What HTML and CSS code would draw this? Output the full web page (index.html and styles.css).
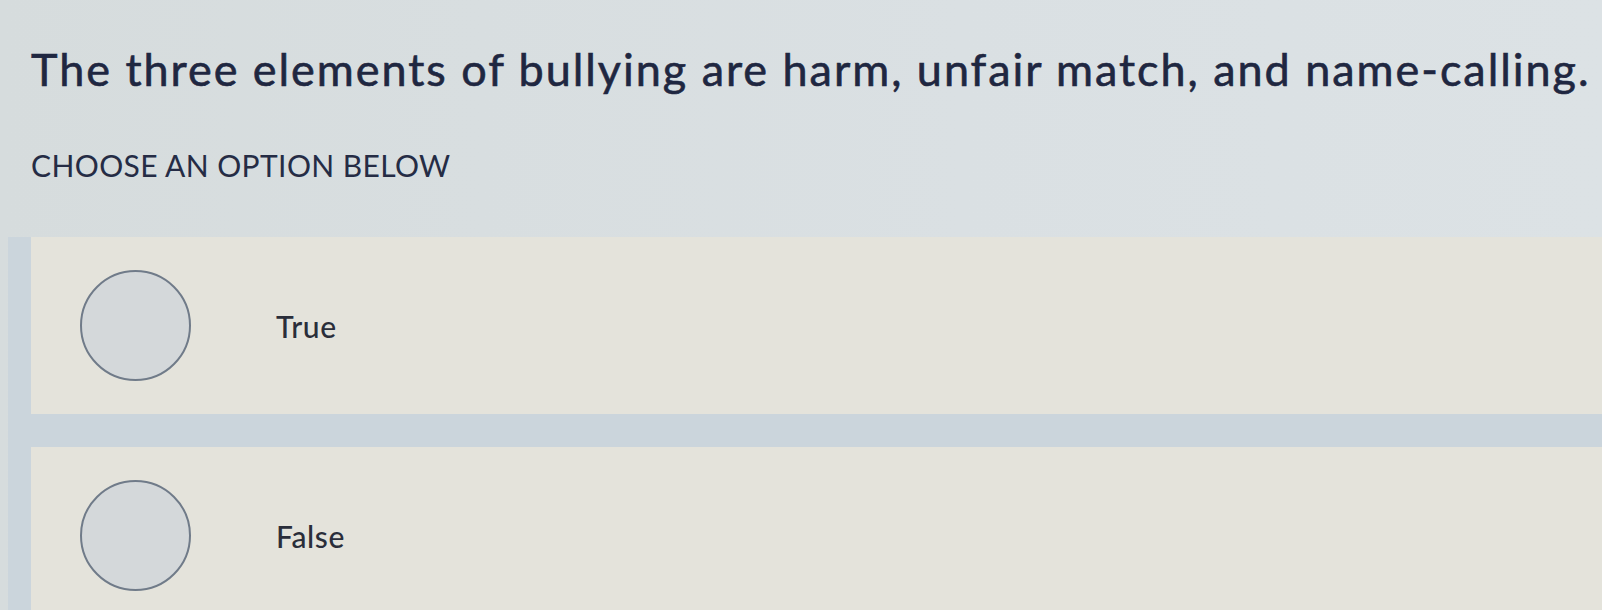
FILE: index.html
```html
<!DOCTYPE html>
<html>
<head>
	<meta charset="UTF-8">
	<title>Question</title>
	<link rel="stylesheet" href="styles.css">
</head>
<body>
	<div class="question">
		<h1 class="prompt">The three elements of bullying are harm, unfair match, and name-calling.</h1>
		<h3 class="hint">CHOOSE AN OPTION BELOW</h3>
	</div>
	<div class="options">
		<label class="option">
			<span class="radio"></span>
			<span class="label">True</span>
		</label>
		<label class="option">
			<span class="radio"></span>
			<span class="label">False</span>
		</label>
	</div>
</body>
</html>
```

FILE: styles.css
```css
	*{
		margin: 0;
		padding: 0;
		box-sizing: border-box;
	}
	body{
		font-family: "Lato", "Liberation Sans", sans-serif;
		background: linear-gradient(90deg, #d6dcdd 0%, #dae0e3 60%, #dce2e5 100%);
		color: #1f2741;
		overflow: hidden;
		height: 610px;
	}
	.question{
		padding: 40px 0 0 31px;
	}
	.prompt{
		font-size: 45px;
		font-weight: 400;
		letter-spacing: 1.95px;
		line-height: 58px;
		white-space: nowrap;
		-webkit-text-stroke: 0.6px #1f2741;
	}
	.hint{
		margin-top: 49px;
		font-size: 30px;
		font-weight: 400;
		letter-spacing: 0.4px;
		line-height: 36px;
		color: #252c45;
	}
	.options{
		margin: 54px 0 0 8px;
		padding-left: 23px;
		background: #cbd5dc;
		display: flex;
		flex-direction: column;
		gap: 33px;
	}
	.option{
		display: flex;
		align-items: center;
		height: 177px;
		padding-left: 49px;
		background: #e4e3db;
		cursor: pointer;
	}
	.radio{
		width: 111px;
		height: 111px;
		border-radius: 50%;
		border: 2px solid #707b89;
		background: #d4d8da;
		flex-shrink: 0;
	}
	.label{
		margin-left: 85px;
		font-size: 30px;
		font-weight: 500;
		letter-spacing: 0.6px;
		color: #2a2e3a;
	}
```
